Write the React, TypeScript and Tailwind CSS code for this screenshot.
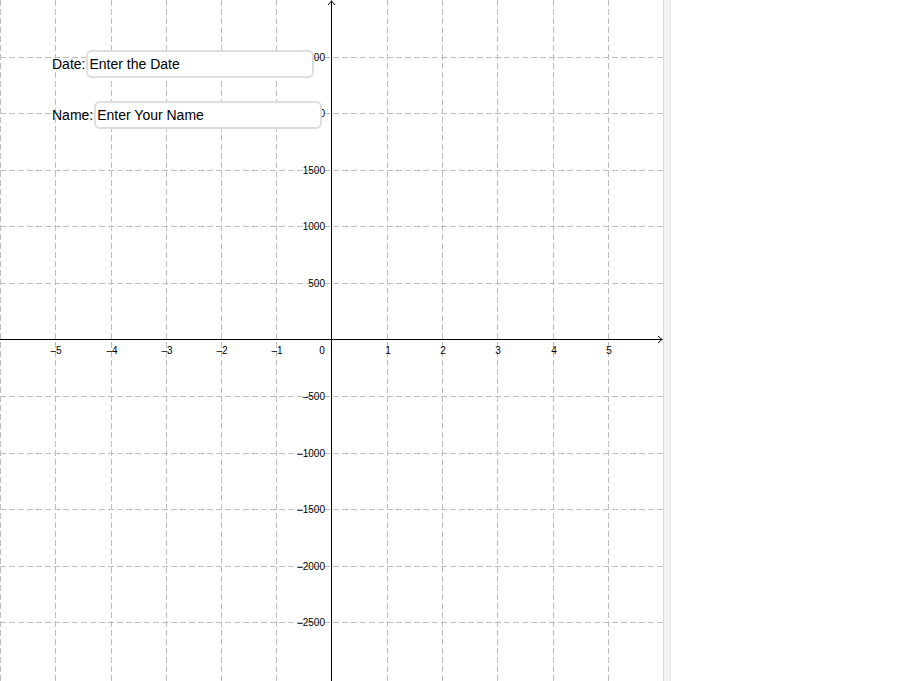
const OX = 331.5;
const OY = 339.5;
const SX = 55.25;
const SY = 56.55;
const W = 663;
const H = 681;

const xs = [-6, -5, -4, -3, -2, -1, 1, 2, 3, 4, 5, 6];
const ys = [5, 4, 3, 2, 1, -1, -2, -3, -4, -5];

function label(n: number) {
  return n < 0 ? "\u2013" + Math.abs(n) : String(n);
}

function Graph() {
  return (
    <svg width={W} height={H} className="block" style={{ fontFamily: "'Liberation Sans', Arial, sans-serif" }}>
      {xs.map((i) => (
        <line
          key={"vx" + i}
          x1={Math.round(OX + i * SX) + 0.5}
          x2={Math.round(OX + i * SX) + 0.5}
          y1={0}
          y2={H}
          stroke="#c0c0c0"
          strokeDasharray="6 3"
        />
      ))}
      {ys.map((j) => (
        <line
          key={"hy" + j}
          x1={0}
          x2={W}
          y1={Math.round(OY - j * SY) + 0.5}
          y2={Math.round(OY - j * SY) + 0.5}
          stroke="#c0c0c0"
          strokeDasharray="6 3"
        />
      ))}

      {/* axes */}
      <line x1={0} x2={W - 0.5} y1={OY} y2={OY} stroke="#000" />
      <line x1={OX} x2={OX} y1={0.5} y2={H} stroke="#000" />
      <path d={`M${OX - 3.5} 5 L${OX} 1 L${OX + 3.5} 5`} fill="none" stroke="#000" />
      <path d={`M${W - 5} ${OY - 3.5} L${W - 1} ${OY} L${W - 5} ${OY + 3.5}`} fill="none" stroke="#000" />

      {/* x labels */}
      {[-5, -4, -3, -2, -1, 1, 2, 3, 4, 5].map((i) => (
        <text key={"xl" + i} x={Math.round(OX + i * SX) + 1} y={354} fontSize={10} textAnchor="middle" fill="#000">
          {label(i)}
        </text>
      ))}
      <text x={322} y={354} fontSize={10} textAnchor="middle" fill="#000">
        0
      </text>

      {/* y labels */}
      {ys.map((j) => (
        <text key={"yl" + j} x={325} y={Math.round(OY - j * SY) + 4} fontSize={10} textAnchor="end" fill="#000">
          {label(j * 500)}
        </text>
      ))}
    </svg>
  );
}

function Field({ name, value, top }: { name: string; value: string; top: string }) {
  return (
    <div className={`absolute left-[52px] ${top} flex items-center gap-[1px]`}>
      <span className="text-[14px] text-black">{name}</span>
      <input
        readOnly
        defaultValue={value}
        className="w-[228px] h-[28px] rounded-[6px] border-2 border-[#dddddd] bg-white px-[1px] text-[14px] text-black outline-none font-['Liberation_Sans',Arial,sans-serif]"
      />
    </div>
  );
}

export default function App() {
  return (
    <div className="flex h-[681px] w-[906px] bg-white font-['Liberation_Sans',Arial,sans-serif] overflow-hidden">
      <div className="relative w-[663px] h-[681px] shrink-0">
        <Graph />
        <Field name="Date:" value="Enter the Date" top="top-[50px]" />
        <Field name="Name:" value="Enter Your Name" top="top-[101px]" />
      </div>
      <div className="w-[8px] h-full shrink-0 border-l border-r border-l-[#d9d9d9] border-r-[#e8e8e8] bg-[#f3f3f3]" />
      <div className="flex-1" />
    </div>
  );
}
